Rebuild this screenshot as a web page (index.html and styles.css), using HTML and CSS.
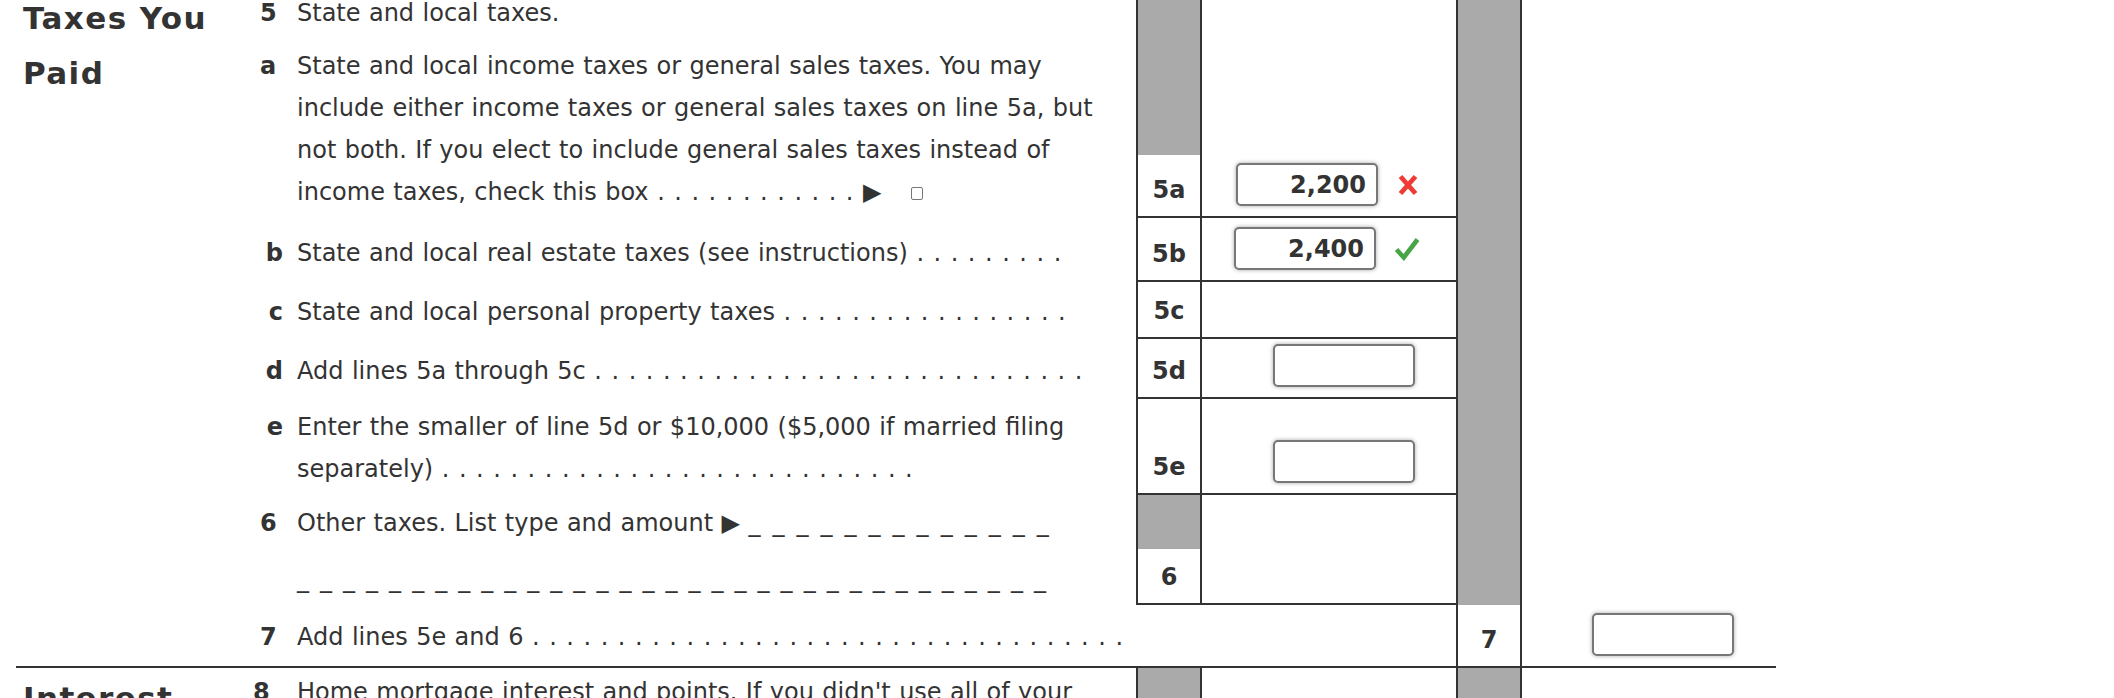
FILE: index.html
```html
<!DOCTYPE html>
<html>
<head>
<meta charset="utf-8">
<link rel="stylesheet" href="styles.css">
</head>
<body>
<div class="form">
  <!-- heading -->
  <div class="head span-head">Taxes You<br>Paid</div>

  <!-- row 1 : line 5 -->
  <div class="item r1 start pt1"><span class="n">5</span><span class="t">State and local taxes.</span></div>

  <!-- row 2 : line 5a -->
  <div class="item r2 end pb5"><span class="n">a</span><span class="t">State and local income taxes or general sales taxes. You may<br>include either income taxes or general sales taxes on line 5a, but<br>not both. If you elect to include general sales taxes instead of<br>income taxes, check this box<span class="dots"> . . . . . . . . . . . .</span> ▶<span class="cb"></span></span></div>

  <div class="b1 r12 hb stack">
    <div class="fill"></div>
    <div class="lab h61">5a</div>
  </div>
  <div class="b2 r12 hb amtcell">
    <div class="grp"><input class="amt" type="text" value="2,200"><svg class="ico" viewBox="0 0 22 22" width="22" height="22"><path d="M3.5 2.5 L18.5 19.5 M18.5 2.5 L3.5 19.5" stroke="#ee3b36" stroke-width="4.8" fill="none"/></svg></div>
  </div>
  <div class="b3 r17 grey"></div>
  <div class="b4 r17"></div>

  <!-- row 3 : 5b -->
  <div class="item r3 end pb8"><span class="n rt">b</span><span class="t">State and local real estate taxes (see instructions)<span class="dots"> . . . . . . . . .</span></span></div>
  <div class="b1 r3 hb lab">5b</div>
  <div class="b2 r3 hb amtcell">
    <div class="grp"><input class="amt" type="text" value="2,400"><svg class="ico chk" viewBox="0 0 26 24" width="26" height="24"><path d="M2.5 12.5 L9.8 20.5 L23.5 2.5" stroke="#47a447" stroke-width="4.6" fill="none"/></svg></div>
  </div>

  <!-- row 4 : 5c -->
  <div class="item r4 end pb6"><span class="n rt">c</span><span class="t">State and local personal property taxes<span class="dots"> . . . . . . . . . . . . . . . . .</span></span></div>
  <div class="b1 r4 hb lab">5c</div>
  <div class="b2 r4 hb"></div>

  <!-- row 5 : 5d -->
  <div class="item r5 end pb7"><span class="n rt">d</span><span class="t">Add lines 5a through 5c<span class="dots"> . . . . . . . . . . . . . . . . . . . . . . . . . . . . .</span></span></div>
  <div class="b1 r5 hb lab">5d</div>
  <div class="b2 r5 hb amtcell"><input class="amt" type="text" value=""></div>

  <!-- row 6 : 5e -->
  <div class="item r6 end pb5"><span class="n rt">e</span><span class="t">Enter the smaller of line 5d or $10,000 ($5,000 if married filing<br>separately)<span class="dots"> . . . . . . . . . . . . . . . . . . . . . . . . . . . .</span></span></div>
  <div class="b1 r6 hb lab">5e</div>
  <div class="b2 r6 hb amtcell"><input class="amt" type="text" value=""></div>

  <!-- row 7 : line 6 -->
  <div class="item r7 start pt7"><span class="n">6</span><span class="t">Other taxes. List type and amount ▶ <span class="dash dash1">_ _ _ _ _ _ _ _ _ _ _ _ _</span><span class="dashline dash">_ _ _ _ _ _ _ _ _ _ _ _ _ _ _ _ _ _ _ _ _ _ _ _ _ _ _ _ _ _ _ _ _</span></span></div>
  <div class="b1 r7 hb stack">
    <div class="fill"></div>
    <div class="lab h54">6</div>
  </div>
  <div class="b2 r7 hb"></div>

  <!-- row 8 : line 7 -->
  <div class="head r8 hb"></div>
  <div class="item r8 end pb8 hb full"><span class="n">7</span><span class="t">Add lines 5e and 6<span class="dots"> . . . . . . . . . . . . . . . . . . . . . . . . . . . . . . . . . . .</span></span></div>
  <div class="b1n r8 hb"></div>
  <div class="b2 r8 hb"></div>
  <div class="b3 r8 hb lab">7</div>
  <div class="b4 r8 hb amtcell pr42"><input class="amt" type="text" value=""></div>

  <!-- row 9 : line 8 -->
  <div class="head r9 pt3">Interest</div>
  <div class="item r9 start pt3"><span class="n shift">8</span><span class="t">Home mortgage interest and points. If you didn't use all of your</span></div>
  <div class="b1 r9 grey"></div>
  <div class="b2 r9"></div>
  <div class="b3 r9 grey"></div>
  <div class="b4 r9"></div>
</div>
</body>
</html>
```

FILE: styles.css
```css
* {
  box-sizing: border-box;
  margin: 0;
  padding: 0;
}

html, body {
  overflow: hidden;
  background: #fff;
}

body {
  font-family: "DejaVu Sans", Verdana, sans-serif;
  font-size: 24px;
  color: #333;
}

.form {
  display: grid;
  grid-template-columns: 244px 37px 839px 66px 254px 66px 254px;
  grid-template-rows: 44px 183px 64px 57px 60px 96px 110px 63px 40px;
  margin-top: -9px;
  margin-left: 16px;
  width: 1760px;
}

/* heading column */
.head {
  grid-column: 1;
  font-weight: bold;
  font-size: 31px;
  line-height: 55px;
  letter-spacing: 1.4px;
  padding-left: 7px;
}
.span-head { grid-row: 1 / 8; }

/* row placement */
.r1 { grid-row: 1; }
.r2 { grid-row: 2; }
.r3 { grid-row: 3; }
.r4 { grid-row: 4; }
.r5 { grid-row: 5; }
.r6 { grid-row: 6; }
.r7 { grid-row: 7; }
.r8 { grid-row: 8; }
.r9 { grid-row: 9; }
.r12 { grid-row: 1 / 3; }
.r17 { grid-row: 1 / 8; }

/* left text items */
.item {
  grid-column: 2 / 4;
  display: flex;
  align-items: flex-start;
  line-height: 42px;
}
.item.start { align-self: start; }
.item.end { align-self: end; }
.item.full { align-self: stretch; align-items: flex-end; }

.n {
  flex: none;
  width: 37px;
  font-weight: bold;
}
.n.rt {
  text-align: right;
  padding-right: 14px;
}
.n.shift {
  margin-left: -7px;
  width: 44px;
}
.t {
  flex: 1;
  word-spacing: 0.8px;
}

.dots { letter-spacing: 0.95px; word-spacing: 0; }
.dash { letter-spacing: 1.7px; word-spacing: 0; }
.dash1 { letter-spacing: 2.2px; }
.dashline {
  display: block;
  margin-top: 14px;
}

.cb {
  display: inline-block;
  width: 12px;
  height: 13px;
  border: 1px solid #777;
  border-radius: 2px;
  margin-left: 30px;
  vertical-align: middle;
}

.pb5 { padding-bottom: 5px; }
.pb6 { padding-bottom: 6px; }
.pb7 { padding-bottom: 7px; }
.pb8 { padding-bottom: 8px; }
.pt1 { padding-top: 1px; }
.pt3 { padding-top: 3px; }
.pt7 { padding-top: 7px; }

/* box columns */
.b1, .b1n { grid-column: 4; }
.b2 { grid-column: 5; }
.b3 { grid-column: 6; }
.b4 { grid-column: 7; }

.b1, .b3 {
  border-left: 2px solid #333;
  border-right: 2px solid #333;
}
.hb { border-bottom: 2px solid #333; }
.grey { background: #aaa; }

.stack {
  display: flex;
  flex-direction: column;
}
.fill {
  flex: 1;
  background: #aaa;
}

.lab {
  display: flex;
  justify-content: center;
  align-items: flex-end;
  padding-bottom: 5px;
  font-weight: bold;
  line-height: 42px;
}
.h61 { height: 61px; flex: none; }
.h54 { height: 54px; flex: none; }

.amtcell {
  display: flex;
  justify-content: flex-end;
  align-items: flex-end;
  padding-right: 41px;
  padding-bottom: 10px;
}
.amtcell.pr42 { padding-right: 42px; }

.grp {
  display: flex;
  align-items: center;
}

.amt {
  display: block;
  width: 142px;
  height: 43px;
  border: 2px solid #777;
  border-radius: 5px;
  box-shadow: 0 0 4px rgba(0, 0, 0, 0.35);
  background: #fff;
  font-family: "DejaVu Sans", Verdana, sans-serif;
  font-weight: bold;
  font-size: 24px;
  color: #333;
  text-align: right;
  padding: 0 10px;
  outline: none;
}

.ico {
  display: block;
  margin-left: 19px;
  margin-right: -4px;
}
.ico.chk {
  margin-left: 18px;
  margin-right: -5px;
}
```
